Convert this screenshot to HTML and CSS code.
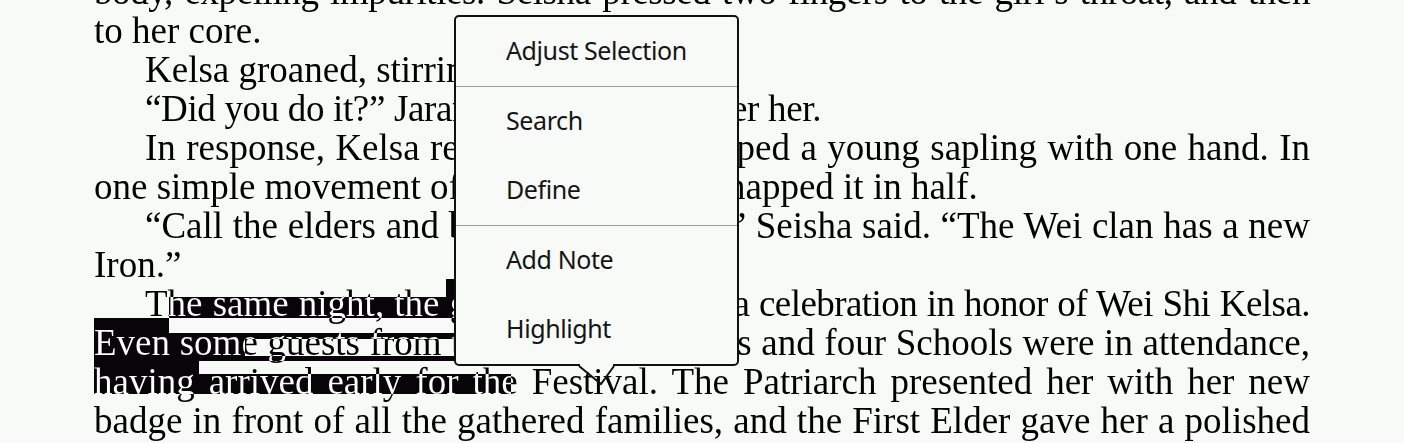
FILE: index.html
```html
<!DOCTYPE html>
<html lang="en">
<head>
<meta charset="utf-8">
<title>Reader</title>
<link rel="stylesheet" href="styles.css">
</head>
<body>
<div class="page">
  <div class="text">
    <div class="ln tight">body, expelling impurities. Seisha pressed two fingers to the girl’s throat, and then</div>
    <div class="ln last">to her core.</div>
    <div class="ln last ind">Kelsa groaned, stirring.</div>
    <div class="ln last ind narrow">“Did you do it?” Jaran asked, leaning over her.</div>
    <div class="ln ind">In response, Kelsa reached out and gripped a young sapling with one hand. In</div>
    <div class="ln last">one simple movement of her wrist, Kelsa snapped it in half.</div>
    <div class="ln ind">“Call the elders and bring out the wine,” Seisha said. “The Wei clan has a new</div>
    <div class="ln last">Iron.”</div>
    <div class="ln ind">The same night, the <span class="wide">grand hall hosted</span> <span class="nar">a celebration in honor of Wei Shi Kelsa.</span></div>
    <div class="ln">Even some guests from the other great clans and four Schools were in attendance,</div>
    <div class="ln">having arrived early for the Festival. The Patriarch presented her with her new</div>
    <div class="ln">badge in front of all the gathered families, and the First Elder gave her a polished</div>
  </div>

  <div class="sel sel-a1"></div>
  <div class="sel sel-a2"></div>
  <div class="sel sel-a3"></div>
  <div class="sel sel-b1"></div>
  <div class="sel sel-b2"></div>
  <div class="sel sel-b2b"></div>
  <div class="sel sel-b3"></div>

  <div class="menu">
    <div class="item">Adjust Selection</div>
    <div class="sep"></div>
    <div class="item">Search</div>
    <div class="item">Define</div>
    <div class="sep"></div>
    <div class="item">Add Note</div>
    <div class="item">Highlight</div>
  </div>
  <svg class="pointer" width="38" height="24" viewBox="0 0 38 24">
    <rect x="2" y="0" width="33" height="4" fill="#f7faf7"/>
    <polyline points="1,3 23,21 36,3" fill="none" stroke="#111" stroke-width="2" stroke-linejoin="miter"/>
  </svg>
</div>
</body>
</html>
```
FILE: styles.css
```css
html, body {
  margin: 0;
  padding: 0;
  background: #f7faf7;
}

.page {
  position: relative;
  width: 1404px;
  height: 443px;
  overflow: hidden;
  isolation: isolate;
  background: #f7faf7;
}

.text {
  width: 1216px;
  margin-left: 94px;
  margin-top: -28px;
  font-family: "Liberation Serif", "Times New Roman", serif;
  font-size: 37px;
  line-height: 39px;
  color: #000;
}

.ln {
  text-align: justify;
  text-align-last: justify;
}

.ln.last {
  text-align-last: left;
}

.ln.tight {
  letter-spacing: -0.4px;
}

.ln.narrow {
  letter-spacing: -0.35px;
}

.wide {
  letter-spacing: 1px;
}

.nar {
  letter-spacing: -0.55px;
}

.ind {
  text-indent: 51px;
}

.sel {
  position: absolute;
  background: #fff;
  mix-blend-mode: difference;
}

.sel-a1 { left: 169px; top: 279px; width: 290px; height: 38.5px; }
.sel-a2 { left: 94px; top: 317.5px; width: 365px; height: 38px; }
.sel-a3 { left: 94px; top: 355.5px; width: 417px; height: 38px; }
.sel-b1 { left: 169px; top: 279px; width: 277px; height: 18px; }
.sel-b2 { left: 169px; top: 317.5px; width: 290px; height: 15.5px; }
.sel-b2b { left: 245px; top: 339px; width: 214px; height: 16.5px; }
.sel-b3 { left: 199px; top: 361px; width: 312px; height: 13px; }

.menu {
  position: absolute;
  left: 454px;
  top: 14.5px;
  width: 285px;
  box-sizing: border-box;
  border: 2px solid #111;
  border-radius: 5px;
  background: #f7faf7;
  z-index: 2;
  font-family: "Noto Sans", "Open Sans", sans-serif;
  color: #151515;
}

.item {
  height: 69px;
  box-sizing: border-box;
  padding-bottom: 2px;
  display: flex;
  align-items: center;
  padding-left: 50px;
  font-size: 25px;
  letter-spacing: -0.4px;
}

.sep {
  height: 1px;
  background: #9a9a9a;
}

.pointer {
  position: absolute;
  left: 578px;
  top: 363px;
  z-index: 3;
}
```
